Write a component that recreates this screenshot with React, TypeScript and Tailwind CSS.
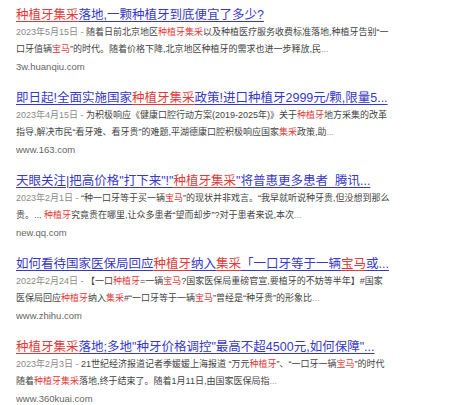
import React from 'react'

// Text inside [ ] is a highlighted keyword
type Result = {
  title: string
  date: string
  line1: string
  line2: string
  url: string
}

const results: Result[] = [
  {
    title: '[种植牙集采]落地,一颗种植牙到底便宜了多少?',
    date: '2023年5月15日',
    line1: '随着日前北京地区[种植牙集采]以及种植医疗服务收费标准落地,种植牙告别“一',
    line2: '口牙值辆[宝马]”的时代。随着价格下降,北京地区种植牙的需求也进一步释放,民',
    url: '3w.huanqiu.com',
  },
  {
    title: '即日起!全面实施国家[种植牙集采]政策!进口种植牙2999元/颗,限量5...',
    date: '2023年4月15日',
    line1: '为积极响应《健康口腔行动方案(2019-2025年)》关于[种植牙]地方采集的改革',
    line2: '指导,解决市民“看牙难、看牙贵”的难题,平湖德康口腔积极响应国家[集采]政策,助',
    url: 'www.163.com',
  },
  {
    title: '天眼关注|把高价格"打下来"!"[种植牙集采]"将普惠更多患者_腾讯...',
    date: '2023年2月1日',
    line1: '“种一口牙等于买一辆[宝马]”的现状并非戏言。“我早就听说种牙贵,但没想到那么',
    line2: '贵。... [种植牙]究竟贵在哪里,让众多患者“望而却步”?对于患者来说,本次',
    url: 'new.qq.com',
  },
  {
    title: '如何看待国家医保局回应[种植牙]纳入[集采]「一口牙等于一辆[宝马]或...',
    date: '2022年2月24日',
    line1: '【一口[种植牙]=一辆[宝马]?国家医保局重磅官宣,要植牙的不妨等半年】#国家',
    line2: '医保局回应[种植牙]纳入[集采]#“一口牙等于一辆[宝马]”曾经是“种牙贵”的形象比',
    url: 'www.zhihu.com',
  },
  {
    title: '[种植牙集采]落地;多地"种牙价格调控"最高不超4500元,如何保障"...',
    date: '2023年2月3日',
    line1: '21世纪经济报道记者季媛媛上海报道 “万元[种植牙]”、“一口牙一辆[宝马]”的时代',
    line2: '随着[种植牙集采]落地,终于结束了。随着1月11日,由国家医保局指',
    url: 'www.360kuai.com',
  },
]

const split = (text: string) =>
  text
    .split(/(\[[^\]]+\])/)
    .filter(Boolean)
    .map((part) =>
      part.startsWith('[') ? { text: part.slice(1, -1), hit: true } : { text: part, hit: false }
    )

const Title = ({ text }: { text: string }) => (
  <div className="whitespace-nowrap text-[12.5px] leading-[18px]">
    {split(text).map((seg, i) => (
      <span
        key={i}
        className={`underline underline-offset-2 ${seg.hit ? 'text-[#e03a3a]' : 'text-[#3838c8]'}`}
      >
        {seg.text}
      </span>
    ))}
  </div>
)

const Snippet = ({ text }: { text: string }) => (
  <>
    {split(text).map((seg, i) => (
      <span key={i} className={seg.hit ? 'text-[#e03a3a]' : ''}>
        {seg.text}
      </span>
    ))}
  </>
)

export default function App() {
  return (
    <div
      className="min-h-[405px] w-[474px] overflow-hidden bg-white pl-4 pt-[6px]"
      style={{ fontFamily: 'Arial, "Liberation Sans", "Noto Sans CJK SC", sans-serif' }}
    >
      <div className="flex flex-col gap-[14px]">
        {results.map((r) => (
          <div key={r.url} className="flex flex-col">
            <Title text={r.title} />
            <div className="whitespace-nowrap text-[9px] leading-[17px] text-[#444]">
              <span className="text-[#8a8a8a]">{r.date} - </span>
              <Snippet text={r.line1} />
            </div>
            <div className="whitespace-nowrap text-[9px] leading-[17px] text-[#444]">
              <Snippet text={r.line2} />
              <span className="text-[#9a9a9a]">...</span>
            </div>
            <div className="text-[9.5px] leading-[17px] text-[#666]">{r.url}</div>
          </div>
        ))}
      </div>
    </div>
  )
}
